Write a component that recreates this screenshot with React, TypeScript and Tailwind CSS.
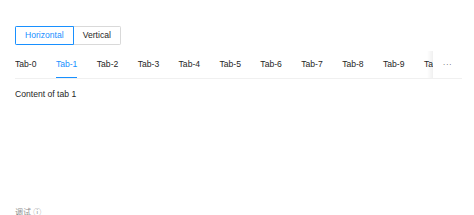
import { useState } from "react";

const tabs = Array.from({ length: 12 }, (_, i) => `Tab-${i}`);

export default function App() {
  const [mode, setMode] = useState<"top" | "left">("top");
  const [active, setActive] = useState(1);

  return (
    <div
      className="min-h-screen bg-white pt-[26px] pl-[15px] pr-[12px] text-[8.6px] leading-[13.2px] text-[#262626]"
      style={{ fontFamily: '"Liberation Sans", Arial, "Noto Sans CJK SC", sans-serif' }}
    >
      {/* mode switch */}
      <div className="flex mb-[6px]">
        <button
          onClick={() => setMode("top")}
          className={`h-[19px] px-[9px] border rounded-l-[1.2px] ${
            mode === "top"
              ? "border-[#1890ff] text-[#1890ff] relative z-10"
              : "border-[#d9d9d9]"
          }`}
        >
          Horizontal
        </button>
        <button
          onClick={() => setMode("left")}
          className={`h-[19px] px-[9px] border -ml-px rounded-r-[1.2px] ${
            mode === "left"
              ? "border-[#1890ff] text-[#1890ff] relative z-10"
              : "border-[#d9d9d9]"
          }`}
        >
          Vertical
        </button>
      </div>

      {/* tabs nav */}
      <div className="flex items-stretch h-[28px] border-b border-[#f0f0f0] mb-[9px]">
        <div className="relative flex-1 overflow-hidden">
          <div className="flex h-full">
            {tabs.map((t, i) => (
              <div
                key={t}
                onClick={() => setActive(i)}
                className={`relative shrink-0 flex items-center mr-[19.4px] cursor-pointer ${
                  active === i ? "text-[#1890ff]" : ""
                }`}
              >
                {t}
                {active === i && (
                  <span className="absolute left-0 right-0 bottom-[-1px] h-[2px] bg-[#1890ff]" />
                )}
              </div>
            ))}
          </div>
          <div className="absolute right-0 top-0 bottom-0 w-[6px] bg-gradient-to-l from-[rgba(0,0,0,0.06)] to-transparent" />
        </div>
        <div className="w-[29px] flex items-center justify-center text-[#595959] tracking-[0.5px] text-[8px]">
          ···
        </div>
      </div>

      <div>Content of tab {active}</div>

      <div className="mt-[105px] text-[8px] text-[#8c8c8c]">调试 ⓘ</div>
    </div>
  );
}
